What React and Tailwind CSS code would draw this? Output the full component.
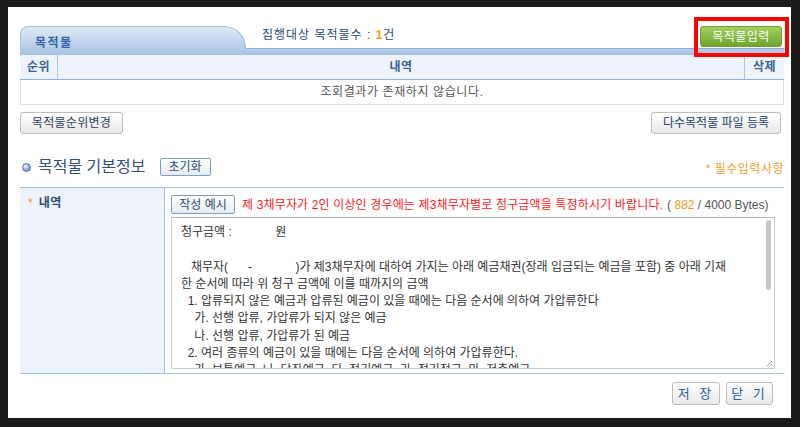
const sp = (n) => ' '.repeat(n)

const lines = [
  '청구금액 :' + sp(13) + '원',
  ' ',
  sp(3) + '채무자(' + sp(6) + '-' + sp(13) + ')가 제3채무자에 대하여 가지는 아래 예금채권(장래 입금되는 예금을 포함) 중 아래 기재',
  '한 순서에 따라 위 청구 금액에 이를 때까지의 금액',
  sp(2) + '1. 압류되지 않은 예금과 압류된 예금이 있을 때에는 다음 순서에 의하여 가압류한다',
  sp(4) + '가. 선행 압류, 가압류가 되지 않은 예금',
  sp(4) + '나. 선행 압류, 가압류가 된 예금',
  sp(2) + '2. 여러 종류의 예금이 있을 때에는 다음 순서에 의하여 가압류한다.',
  sp(4) + '가. 보통예금  나. 당좌예금  다. 정기예금  라. 정기적금  마. 저축예금',
]

function GrayButton({ children, className = '' }) {
  return (
    <button
      className={
        'flex items-center justify-center rounded-[3px] border border-[#bcbcbc] bg-gradient-to-b from-white to-[#e8e8e8] text-[12px] leading-none ' +
        className
      }
    >
      {children}
    </button>
  )
}

export default function App() {
  return (
    <div className="w-[800px] h-[427px] bg-[#1b1b1b] pt-[7px] pl-[8px] pr-[9px] pb-[9px] [font-family:'Liberation_Sans','Noto_Sans_CJK_KR',sans-serif]">
      <div className="relative h-full bg-white pl-[12px] pr-[7px] pt-[19px]">
        {/* 목적물 목록 헤더 */}
        <div className="flex h-[29px]">
          <div className="w-[226px] h-full rounded-tl-[8px] rounded-tr-[22px] border border-b-0 border-[#a3bedf] bg-gradient-to-b from-[#e0eaf6] to-[#a7c2e2] pl-[14px] pt-[9px] text-[12px] leading-[14px] font-bold tracking-[1.5px] text-[#2f62a3]">
            목적물
          </div>
          <div className="flex-1 flex flex-col">
            <div className="flex-1 flex items-start pl-[16px]">
              <span className="pt-[2px] text-[12px] leading-[14px] tracking-[1px] text-[#2e4a6c]">
                집행대상 목적물수 : <span className="font-bold text-[#f59a17]">1</span>건
              </span>
              <div className="flex-1" />
              <button className="mr-[2px] w-[82px] h-[21px] rounded-[3px] border border-[#6f9d37] bg-gradient-to-b from-[#a3d061] to-[#6da52b] text-[12px] leading-none tracking-[0.5px] text-white">
                목적물입력
              </button>
            </div>
            <div className="h-[7px] border-t border-[#8cafd9] bg-gradient-to-b from-[#b8cfea] to-[#a2bedf]" />
          </div>
        </div>

        {/* 테이블 헤더 */}
        <div className="flex h-[25px] bg-[#eef3fb] border-b border-[#8fb4e2] text-[12px] font-bold tracking-[0.5px] text-[#3b6092]">
          <div className="w-[38px] flex items-center justify-center border-r border-[#a9c6ea]">순위</div>
          <div className="flex-1 flex items-center justify-center">내역</div>
          <div className="w-[40px] flex items-center justify-center border-l border-[#a9c6ea]">삭제</div>
        </div>
        <div className="flex h-[25px] items-center justify-center border-x border-b border-[#e0e0e0] text-[12px] tracking-[0.6px] text-[#555]">
          조회결과가 존재하지 않습니다.
        </div>

        <div className="mt-[7px] flex justify-between pr-[3px]">
          <GrayButton className="w-[103px] h-[22px] tracking-[0.3px] text-[#2d3f58]">목적물순위변경</GrayButton>
          <GrayButton className="w-[130px] h-[22px] text-[#22406a]">다수목적물 파일 등록</GrayButton>
        </div>

        {/* 기본정보 */}
        <div className="mt-[24px] flex items-end h-[18px]">
          <span className="ml-[2px] w-[9px] h-[9px] self-center rounded-full border border-[#5a79ad] bg-[radial-gradient(circle_at_35%_35%,#ffffff,#8aa6d6_55%,#3f62a0)]" />
          <span className="ml-[7px] self-center text-[16px] leading-[18px] text-[#33507a]">목적물 기본정보</span>
          <button className="ml-[14px] w-[51px] h-[18px] rounded-[2px] border border-[#7f9bc0] bg-gradient-to-b from-white to-[#e5ebf3] text-[12px] leading-none text-[#2c4a72]">
            초기화
          </button>
          <div className="flex-1" />
          <span className="text-[12px] leading-[14px] text-[#f5a02a] tracking-[0.5px]">* 필수입력사항</span>
        </div>

        <div className="mt-[11px] flex h-[187px] border-y border-[#9fc0ea]">
          <div className="w-[145px] bg-[#eef3fb] border-r border-[#9fc0ea] pl-[8px] pt-[8px] text-[12px] leading-[14px]">
            <span className="text-[#f39a1f]">*</span>
            <span className="ml-[6px] font-bold tracking-[0.5px] text-[#2b4a78]">내역</span>
          </div>
          <div className="flex-1 min-w-0 pl-[6px] pr-[9px] pt-[7px]">
            <div className="flex items-center h-[19px] whitespace-nowrap">
              <button className="shrink-0 w-[64px] h-[19px] rounded-[2px] border border-[#7f9bc0] bg-gradient-to-b from-white to-[#e5ebf3] text-[12px] leading-none text-[#2c4a72]">
                작성 예시
              </button>
              <span className="ml-[7px] text-[12px] tracking-[0.15px] text-[#ff1a1a]">
                제 3채무자가 2인 이상인 경우에는 제3채무자별로 청구금액을 특정하시기 바랍니다.
              </span>
              <span className="ml-[4px] text-[12px] text-[#555]">
                ( <span className="text-[#f59a17]">882</span> / 4000 Bytes)
              </span>
            </div>
            <div className="relative mt-[3px] h-[152px] overflow-hidden border border-[#c9c9c9] border-t-[#b5b5b5] pl-[9px] pt-[6px] text-[12px] leading-[17.3px] text-[#333]">
              {lines.map((l, i) => (
                <div key={i} className="whitespace-pre">{l}</div>
              ))}
              <div className="absolute right-[3px] top-[2px] w-[5px] h-[70px] rounded-full bg-[#c6c6c6]" />
              <svg className="absolute right-[1px] bottom-[1px]" width="7" height="7" viewBox="0 0 7 7">
                <path d="M6 1 L1 6 M6 4 L4 6" stroke="#9a9a9a" strokeWidth="1" />
              </svg>
            </div>
          </div>
        </div>

        <div className="mt-[8px] flex justify-end gap-[6px] pr-[11px]">
          <GrayButton className="w-[48px] h-[23px] text-[13px] text-[#2d5d99] tracking-[3px]">저 장</GrayButton>
          <GrayButton className="w-[47px] h-[23px] text-[13px] text-[#2d5d99] tracking-[3px]">닫 기</GrayButton>
        </div>

        {/* 강조 표시 */}
        <div className="absolute left-[686px] top-[10px] w-[95px] h-[40px] border-[4px] border-[#ff0000]" />
      </div>
    </div>
  )
}
